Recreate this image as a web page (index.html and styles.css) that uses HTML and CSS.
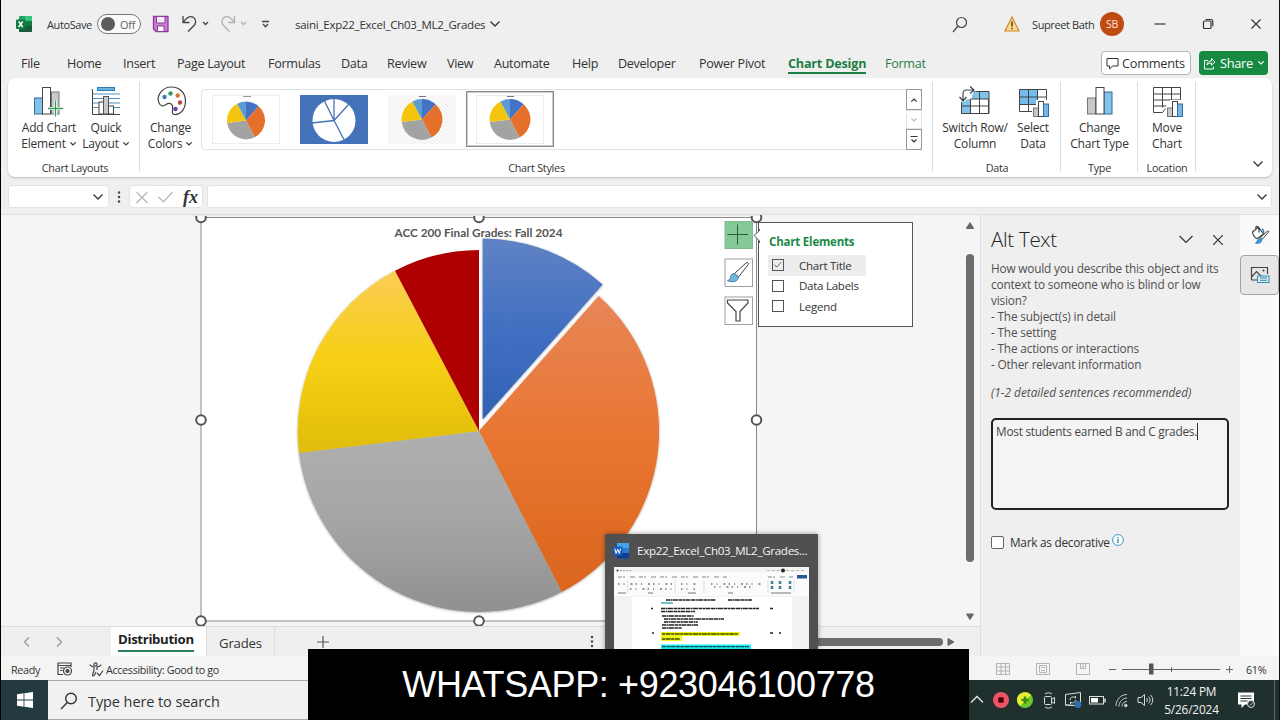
FILE: index.html
```html
<!DOCTYPE html>
<html lang="en">
<head>
<meta charset="utf-8">
<title>saini_Exp22_Excel_Ch03_ML2_Grades</title>
<link rel="stylesheet" href="styles.css">
</head>
<body>
<svg class="defs" width="0" height="0">
  <defs>
    <symbol id="minipie" viewBox="-21 -21 42 42">
      <path d="M0 0V-20A20 20 0 0 1 13.3-14.9Z" fill="#4472c4"/>
      <path d="M0 0L13.3-14.9A20 20 0 0 1 9.2 17.7Z" fill="#e5702c"/>
      <path d="M0 0L9.2 17.7A20 20 0 0 1-19.8 2.5Z" fill="#a3a3a3"/>
      <path d="M0 0L-19.8 2.5A20 20 0 0 1-9.3-17.7Z" fill="#f3c50f"/>
      <path d="M0 0L-9.3-17.7A20 20 0 0 1 0-20Z" fill="#5b9bd5"/>
    </symbol>
    <symbol id="chev" viewBox="0 0 12 8"><path d="M1.5 1.5L6 6l4.500-4.500" fill="none" stroke="currentColor" stroke-width="1.300"/></symbol>
    <symbol id="chevs" viewBox="0 0 8 6"><path d="M1.300 1.300L4 4l2.700-2.700" fill="none" stroke="currentColor" stroke-width="1.200"/></symbol>
  </defs>
</svg>
<div class="app">
  <header class="titlebar">
    <svg class="xl" width="18" height="18" viewBox="15 15 18 18"><rect x="19" y="16" width="13" height="16" rx="1" fill="#21a366"/><path d="M25 16h6a1 1 0 0 1 1 1v4h-7z" fill="#33c481"/><path d="M19 24h13v7a1 1 0 0 1-1 1H20a1 1 0 0 1-1-1z" fill="#185c37"/><path d="M25 21h7v5h-7z" fill="#107c41"/><rect x="16" y="19.500" width="9.500" height="9.500" rx="1" fill="#107c41"/><path d="M18.700 21.500l4 5.500m0-5.500l-4 5.500" stroke="#fff" stroke-width="1.500"/></svg>
    <span class="autosave">AutoSave</span>
    <span class="toggle"><i></i>Off</span>
    <svg class="save" width="18" height="18" viewBox="152 15 18 18"><path d="M153.500 16.500h14.500v15h-12l-2.500-2.500z" fill="#c77fd2" stroke="#8e3ca0" stroke-width="1.300"/><path d="M156.500 16.500h8.500v6.500h-8.500z" fill="#f6ecf8" stroke="#8e3ca0"/><path d="M157.500 31.500v-5.500h6.500v5.500z" fill="#fff" stroke="#8e3ca0"/></svg>
    <svg class="undo" width="88" height="22" viewBox="181 13 88 22" fill="none" stroke="#444" stroke-width="1.300"><path d="M183 16v6.500h6.500M183.500 22c3-5 7-6.500 10-4.500 3.500 2.500 2.500 6-.5 9l-5 5"/><path d="M203 22l2.500 2.500L208 22"/><g stroke="#b0b0b0"><path d="M234.500 16v6.500H228M234 22c-3-5-7-6.500-10-4.500-3.500 2.500-2.500 6 .5 9l5 5"/><path d="M241 22l2.500 2.500L246 22"/></g><path d="M262 21.500h7M263 24l2.500 2.700L268 24" /></svg>
    <span class="docname">saini_Exp22_Excel_Ch03_ML2_Grades</span>
    <svg class="docchev" width="12" height="8"><use href="#chev"/></svg>
    <svg class="search" width="16" height="17" viewBox="952 15 16 17" fill="none" stroke="#444" stroke-width="1.200"><circle cx="961.500" cy="21.500" r="5"/><path d="M958 25l-5 6"/></svg>
    <svg class="warn" width="16" height="16" viewBox="1004 16 16 16"><path d="M1012 17l7 14h-14z" fill="#fbd98a" stroke="#d08a28" stroke-width="1.200"/><path d="M1012 21.500v5m0 1.300v1.500" stroke="#333" stroke-width="1.400"/></svg>
    <span class="user">Supreet Bath</span>
    <span class="avatar">SB</span>
    <svg class="winbtns" width="112" height="16" viewBox="1153 16 112 16" fill="none" stroke="#333" stroke-width="1.200"><path d="M1154.500 24h11"/><rect x="1203.500" y="21" width="7.500" height="7.500" rx="1"/><path d="M1205.500 19.500h5.500a1.800 1.800 0 0 1 1.800 1.800v5"/><path d="M1251.500 19.500l9 9m0-9l-9 9"/></svg>
  </header>
  <nav class="tabs">
    <span class="t46">File</span><span class="t56">Home</span><span class="t54">Insert</span><span class="t91">Page Layout</span><span class="t73">Formulas</span><span class="t46">Data</span><span class="t60">Review</span><span class="t47">View</span><span class="t78">Automate</span><span class="t46">Help</span><span class="t81">Developer</span><span class="t89">Power Pivot</span><span class="t96 active"><b>Chart Design</b></span><span class="format">Format</span>
    <div class="comments"><svg width="13" height="13" viewBox="0 0 13 13"><path d="M1 1.500h11v7.500H6.500L3.500 12V9H1z" fill="none" stroke="#333"/></svg>Comments</div>
    <div class="share"><svg width="13" height="13" viewBox="0 0 13 13" fill="none" stroke="#fff"><path d="M5 3.500H1.500V12h9V9.500M4 8c0-3 2-4 4.500-4V1.500L12 5 8.500 8.200V6C6.500 6 5 6.500 4 8z"/></svg>Share<svg class="schev" width="8" height="6"><use href="#chevs"/></svg></div>
  </nav>
  <section class="ribbon">
    <div class="group g-layouts">
      <div class="btns">
        <div class="rbtn w72"><svg width="32" height="32" viewBox="35 86 32 32"><rect x="36.500" y="98" width="8" height="16" fill="#83c3ea" stroke="#2f6f9c"/><rect x="53.500" y="92" width="7.500" height="22" fill="#c8c8c8" stroke="#777"/><rect x="44.500" y="87.500" width="8" height="26.500" fill="#fff" stroke="#444"/><path d="M57.500 100.500v16M50 108.500h15" stroke="#fff" stroke-width="3"/><path d="M57.500 100.500v16M50 108.500h15" stroke="#2f9e4f" stroke-width="1.300"/></svg><p>Add Chart<br>Element <svg class="c" width="8" height="6"><use href="#chevs"/></svg></p></div>
        <div class="rbtn w44"><svg width="32" height="32" viewBox="90 86 32 32"><path d="M92.500 89v25.500H120" fill="none" stroke="#444"/><path d="M93 94h27M93 98.500h27M93 103h27M93 107.500h27" stroke="#4a93bd"/><rect x="97.500" y="87.500" width="17" height="3" fill="#6bb0dd" stroke="#2f7fb5"/><rect x="99" y="102" width="4.500" height="12" fill="#fff" stroke="#444"/><rect x="103.500" y="96.500" width="5" height="17.500" fill="#c9c9c9" stroke="#555"/><rect x="108.500" y="106" width="5" height="8" fill="#fff" stroke="#444"/></svg><p>Quick<br>Layout <svg class="c" width="8" height="6"><use href="#chevs"/></svg></p></div>
      </div>
      <div class="cap">Chart Layouts</div>
    </div>
    <div class="group g-styles">
      <div class="btns">
        <div class="rbtn w61"><svg width="32" height="32" viewBox="156 86 32 32"><path d="M160 103c-3-7 3-16 12.500-16 8 0 14 6 14 14 0 9-6 14-11 13.500-4-.5-1-5-2-8.500-1-3-4-3.500-6.500-1.500-2.500 2-5.500 2-7-1.500z" fill="#fff" stroke="#444" stroke-width="1.200"/><circle cx="165.500" cy="97" r="2.200" fill="#3a7fb5"/><circle cx="171.500" cy="93.500" r="2.200" fill="#2f9e5a"/><circle cx="178.700" cy="95.500" r="2.200" fill="#e0702c"/><circle cx="181" cy="102.500" r="2.200" fill="#b54a3c"/><circle cx="176.500" cy="109" r="2.200" fill="#6a3fa0"/></svg><p>Change<br>Colors <svg class="c" width="8" height="6"><use href="#chevs"/></svg></p></div>
        <div class="gallery">
          <div class="cell"><svg width="68" height="49" viewBox="0 0 68 49"><rect x=".5" y=".5" width="67" height="48" fill="#fff" stroke="#ececec"/><path d="M31 1.500h8" stroke="#999"/><use href="#minipie" x="14" y="5.500" width="40" height="40"/></svg></div>
          <div class="cell"><svg width="68" height="49" viewBox="0 0 68 49"><rect width="68" height="49" fill="#4472b8"/><circle cx="34" cy="25.500" r="21.500" fill="#fff"/><path d="M34 25.500V2M34 25.500L49 9M34 25.500l10 19M34 25.500l-22 2.500M34 25.500L24 5" stroke="#4472b8" stroke-width="1.300"/></svg></div>
          <div class="cell"><svg width="68" height="49" viewBox="0 0 68 49"><defs><pattern id="hatch" width="4" height="4" patternUnits="userSpaceOnUse"><path d="M0 0l4 4" stroke="#ebebeb"/></pattern></defs><rect width="68" height="49" fill="#fafafa"/><rect width="68" height="49" fill="url(#hatch)"/><path d="M31 1.500h7" stroke="#777"/><use href="#minipie" x="12.500" y="3" width="43" height="43"/></svg></div>
          <div class="cell sel"><svg width="68" height="49" viewBox="0 0 68 49"><rect x=".5" y=".5" width="67" height="48" fill="#fff" stroke="#ececec"/><path d="M31 1.500h7" stroke="#777"/><use href="#minipie" x="12.500" y="3" width="43" height="43"/></svg></div>
          <div class="gscroll"><div><svg width="8" height="6" class="up"><use href="#chevs"/></svg></div><div class="off"><svg width="8" height="6"><use href="#chevs"/></svg></div><div><svg width="10" height="9" viewBox="0 0 10 9" fill="none" stroke="#333" stroke-width="1.200"><path d="M1.500 1.500h7M2.500 4.500L5 7l2.500-2.500"/></svg></div></div>
        </div>
      </div>
      <div class="cap">Chart Styles</div>
    </div>
    <div class="group g-data">
      <div class="btns">
        <div class="rbtn w84"><svg width="34" height="32" viewBox="958 84 34 32"><rect x="961.500" y="89.500" width="27" height="22" fill="#fff" stroke="#444"/><path d="M972 89.500h17v7.500h-17zM961.500 97h9v14.500h-9z" fill="#83c3ea"/><path d="M961.500 111.500v-14M961.500 104h27.500M970.500 97v14.500M979.500 89.500v22M970.500 97H989M961.500 111.500H989v-22H976" fill="none" stroke="#444"/><path d="M958 84h16l-1 8-9 8h-6z" fill="#fff"/><path d="M970 84.500l4 3.500-4 3.500M973.500 88h-7c-3 0-3.500 2-3.500 4v6.500M959.500 95l3.500 4 3.500-4" fill="none" stroke="#444" stroke-width="1.200"/></svg><p>Switch Row/<br>Column</p></div>
        <div class="rbtn w32"><svg width="32" height="32" viewBox="1017 86 32 32"><rect x="1019.500" y="89.500" width="27" height="22" fill="#fff"/><path d="M1019.500 89.500h18v15h-18z" fill="#74bbec"/><path d="M1019.500 89.500h27v22h-27zM1019.500 97h27M1019.500 104.500h27M1028.500 89.500v22M1037.500 89.500v22" fill="none" stroke="#444"/><path d="M1032 105h4v-5h13v18h-17z" fill="#fff"/><rect x="1033.500" y="108" width="5" height="8.500" fill="#c9c9c9" stroke="#777"/><rect x="1038.500" y="101.500" width="5" height="15" fill="#fff" stroke="#444"/><rect x="1043.500" y="104" width="5" height="12.500" fill="#74b8e6" stroke="#2f6f9c"/></svg><p>Select<br>Data</p></div>
      </div>
      <div class="cap">Data</div>
    </div>
    <div class="group g-type">
      <div class="btns center"><div class="rbtn"><svg width="32" height="32" viewBox="1083 86 32 32"><rect x="1086.500" y="98" width="8" height="16" fill="#c8c8c8" stroke="#777"/><rect x="1103" y="92" width="8" height="22" fill="#83c3ea" stroke="#2f6f9c"/><rect x="1095" y="87.500" width="8" height="26.500" fill="#fff" stroke="#444"/></svg><p>Change<br>Chart Type</p></div></div>
      <div class="cap">Type</div>
    </div>
    <div class="group g-loc">
      <div class="btns center"><div class="rbtn"><svg width="32" height="32" viewBox="1151 86 32 32"><path d="M1153.500 87.500h27v18M1153.500 87.500v25h9l3-4M1153.500 94h27M1153.500 100h27M1153.500 106h13M1162.500 87.500v20M1171.500 87.500v15" fill="none" stroke="#444"/><path d="M1166 106h4v-6h13v18h-17z" fill="#fff"/><rect x="1167.500" y="108" width="5" height="8.500" fill="#c9c9c9" stroke="#777"/><rect x="1172.500" y="101.500" width="5" height="15" fill="#fff" stroke="#444"/><rect x="1177.500" y="104" width="5" height="12.500" fill="#74b8e6" stroke="#2f6f9c"/></svg><p>Move<br>Chart</p></div></div>
      <div class="cap">Location</div>
    </div>
    <svg class="collapse" width="12" height="8"><use href="#chev"/></svg>
  </section>
  <section class="formula">
    <div class="namebox"><svg width="12" height="8"><use href="#chev"/></svg></div>
    <svg width="24" height="24" viewBox="0 0 24 24" fill="#444"><circle cx="10" cy="7.500" r="1.200"/><circle cx="10" cy="12" r="1.200"/><circle cx="10" cy="16.500" r="1.200"/></svg>
    <div class="fx"><svg width="50" height="20" viewBox="134 187 50 20" fill="none" stroke="#b5b5b5" stroke-width="1.200"><path d="M136.500 192l11 11m0-11l-11 11M158.500 197l5 5 9-10"/></svg><i>fx</i></div>
    <div class="fbox"><svg width="12" height="8"><use href="#chev"/></svg></div>
  </section>
  <main class="main">
    <div class="left">
      <div class="sheet">
        <svg class="chart" width="962" height="411" viewBox="0 215 962 411">
          <defs>
            <linearGradient id="gb" x2="0" y2="1"><stop offset="0" stop-color="#5f83c4"/><stop offset=".5" stop-color="#426fc1"/><stop offset="1" stop-color="#3161b3"/></linearGradient>
            <linearGradient id="go" x2="0" y2="1"><stop offset="0" stop-color="#e88657"/><stop offset=".5" stop-color="#e87530"/><stop offset="1" stop-color="#da651e"/></linearGradient>
            <linearGradient id="gg" x2="0" y2="1"><stop offset="0" stop-color="#afafaf"/><stop offset=".5" stop-color="#a5a5a5"/><stop offset="1" stop-color="#909090"/></linearGradient>
            <linearGradient id="gy" x2="0" y2="1"><stop offset="0" stop-color="#facd55"/><stop offset=".5" stop-color="#f6cf12"/><stop offset="1" stop-color="#dfbd10"/></linearGradient>
            <filter id="sh" x="-10%" y="-10%" width="120%" height="120%"><feDropShadow dx="0" dy=".5" stdDeviation="1.300" flood-color="#000" flood-opacity=".4"/></filter>
          </defs>
          <rect x="201" y="217.500" width="555.500" height="403.500" fill="#fff" stroke="#8a8a8a"/>
          <text x="394.500" y="237" class="ctitle" textLength="168" lengthAdjust="spacingAndGlyphs">ACC 200 Final Grades: Fall 2024</text>
          <g filter="url(#sh)">
            <path d="M479 431L598.700 296A181.500 181.500 0 0 1 561.700 592Z" fill="url(#go)"/>
            <path d="M479 431L561.700 592A181.500 181.500 0 0 1 299 453Z" fill="url(#gg)"/>
            <path d="M479 431L299 453A181 181 0 0 1 395 270.700Z" fill="url(#gy)"/>
          </g>
          <path d="M479 431L395 270.700A181 181 0 0 1 479 250Z" fill="#ae0000"/>
          <path d="M482.700 419.500V238.500A181 181 0 0 1 602.700 284.500Z" fill="url(#gb)" filter="url(#sh)"/>
          <g fill="#fff" stroke="#555" stroke-width="2"><circle cx="201" cy="217.500" r="4.800"/><circle cx="479" cy="217.500" r="4.800"/><circle cx="756.500" cy="217.500" r="4.800"/><circle cx="201" cy="420" r="4.800"/><circle cx="756.500" cy="420" r="4.800"/><circle cx="201" cy="621" r="4.800"/><circle cx="479" cy="621" r="4.800"/></g>
          <path d="M190 215h570" stroke="#efefef" stroke-width="2"/>
          <g stroke="#a0a0a0"><rect x="725" y="221.500" width="27.500" height="27" fill="#84c996" stroke="#7fb98d"/><rect x="725" y="259" width="27.500" height="27.500" fill="#fff"/><rect x="725" y="297" width="27.500" height="27.500" fill="#fff"/></g>
          <path d="M737.500 224.500v20M727.500 234.500h20.500" stroke="#2c5c3a"/>
          <path d="M734.500 273.500l11.500-10.500c1.500-1 3 0 2.300 1.500L738.500 277z" fill="#fff" stroke="#444"/><path d="M734.500 273.500c-2.500 0-3.500 1.500-4 3.800-.3 2-1.300 2.700-3 3.200 4 2 8.500 1.500 10-1 .6-1.300.8-1.800 1-2.500z" fill="#72b6df" stroke="#3d7ea6"/>
          <path d="M727.500 300h20.500v3l-8 8.500v9.500h-4V311.500l-8.500-8.500z" fill="#fff" stroke="#444" stroke-width="1.200"/>
        </svg>
        <div class="vscroll"><svg width="10" height="10" viewBox="0 0 10 10"><path d="M5 1L9 7a.8.8 0 0 1-.7 1H1.700A.8.800 0 0 1 1 7z" fill="#666"/></svg><i></i><svg width="10" height="10" viewBox="0 0 10 10"><path d="M1.500 2h7L5 7.500z" fill="#666" stroke="#666" stroke-linejoin="round"/></svg></div>
        <div class="flyout">
          <svg class="ptr" width="7" height="14" viewBox="0 0 7 14"><path d="M6.500 0v1.500L1 6.500l5.500 5.500V14" fill="#fff" stroke="#555"/></svg>
          <b>Chart Elements</b>
          <div class="opt on"><svg width="12" height="12" viewBox="0 0 12 12"><path d="M1.500 5.500l3 3L10 2.500" fill="none" stroke="#444"/></svg>Chart Title</div>
          <div class="opt"><svg width="12" height="12"></svg>Data Labels</div>
          <div class="opt"><svg width="12" height="12"></svg>Legend</div>
        </div>
      </div>
      <div class="sheettabs">
        <svg width="46" height="12" viewBox="20 635 46 12" fill="none" stroke="#999" stroke-width="1.300"><path d="M29 636.500l-4.500 4.500 4.500 4.500M57 636.500l4.500 4.500-4.500 4.500"/></svg>
        <div class="stab cur"><span>Distribution</span></div>
        <div class="stab">Grades</div>
        <svg class="plus" width="12" height="12" viewBox="0 0 12 12"><path d="M6 0v12M0 6h12" stroke="#555" stroke-width="1.200"/></svg>
        <svg class="dots" width="4" height="14" viewBox="0 0 4 14" fill="#444"><circle cx="2" cy="2" r="1.200"/><circle cx="2" cy="6.500" r="1.200"/><circle cx="2" cy="11" r="1.200"/></svg>
        <div class="hbar"></div>
        <svg width="8" height="10" viewBox="0 0 8 10"><path d="M1 1.500v7L7 5z" fill="#666" stroke="#666" stroke-linejoin="round"/></svg>
      </div>
    </div>
    <aside class="pane">
      <div class="phead"><h2>Alt Text</h2><svg width="14" height="9" viewBox="0 0 14 9"><path d="M.5 1L7 7.500 13.500 1" fill="none" stroke="#333" stroke-width="1.200"/></svg><svg width="10" height="10" viewBox="0 0 10 10"><path d="M0 0l10 10M10 0L0 10" stroke="#333" stroke-width="1.200"/></svg></div>
      <p class="desc">How would you describe this object and its<br>context to someone who is blind or low<br>vision?<br>- The subject(s) in detail<br>- The setting<br>- The actions or interactions<br>- Other relevant information</p>
      <p class="hint">(1-2 detailed sentences recommended)</p>
      <div class="area">Most students earned B and C grades.<i></i></div>
      <div class="mark"><span class="box"></span>Mark as decorative<svg width="12" height="12" viewBox="0 0 12 12"><circle cx="6" cy="6" r="5.400" fill="#fff" stroke="#3a9cc4"/><path d="M6 5v4M6 3v1.200" stroke="#2584b0" stroke-width="1.300"/></svg></div>
    </aside>
    <div class="strip">
      <svg width="38" height="36" viewBox="1240 217 38 36"><path d="M1252.500 232l6-5 5 7-6 4.500c-2 .5-5-4-5-6.500zM1256 229.500c-1-4 2-4.500 3 0v3" fill="#fff" stroke="#444" stroke-width="1.200"/><path d="M1262 229c1.500 1 2 2.500 1.500 4.500" stroke="#2f7fb5" stroke-width="1.500" fill="none"/><path d="M1269 231.500l-6.500 7.500-2-1.500 7-6.500z" fill="#fff" stroke="#444"/><path d="M1262.500 239c0 3-2.500 6-8 4.500 2-1 2.500-5 6-6z" fill="#3f95c8"/></svg>
      <div class="active"><svg width="20" height="18" viewBox="0 0 20 18"><path d="M1.500 14V1.500h16V8M1.500 11l5-5.500 5 5M9 14H1.500" fill="none" stroke="#444" stroke-width="1.200"/><circle cx="13.500" cy="4.500" r="1" fill="#444"/><rect x="7.500" y="10" width="11.500" height="6.500" fill="#d9edf7" stroke="#3789b0"/><path d="M10 12h7M10 14.300h7" stroke="#3789b0"/></svg></div>
    </div>
  </main>
  <footer class="status">
    <span class="ready">Ready</span>
    <svg class="macro" width="16" height="14" viewBox="0 0 16 14" fill="none" stroke="#444" stroke-width="1.200"><path d="M6 12.500H1V1h13v4M1 3.500h13M3 6h4M3 8.500h2.500"/><circle cx="10.500" cy="9" r="4"/><circle cx="10.500" cy="9" r="1.500" fill="#444"/></svg>
    <svg class="acc" width="15" height="15" viewBox="0 0 15 15" fill="none" stroke="#444" stroke-width="1.200"><circle cx="6.500" cy="2.500" r="1.600"/><path d="M1 2.500c0 1.500 1.500 2 4 2.500v3.500L3.500 13c0 1.500 1.500 1 2 0L7 10M12 2.500c0 1.500-1.500 2-4 2.500v3M8 11l2.500 2.500L14 8.500"/></svg>
    <span class="acctext">Accessibility: Good to go</span>
    <svg class="views" width="96" height="14" viewBox="995 662 96 14" fill="none" stroke="#b4b4b4"><path d="M996.500 663.500h13v11h-13zM996.500 667h13M996.500 671h13M1001 663.500v11M1005.500 663.500v11M1036.500 663.500h13v11h-13zM1039.500 665.500h7v7h-7zM1041 667.500h4M1041 670.500h4M1076.500 663.500h13v11h-13zM1080.500 663.500v5h5v-5M1083 663.500v5"/></svg>
    <svg class="zoom" width="126" height="14" viewBox="1108 662 126 14" stroke="#666"><path d="M1109 669.500h7M1122 669.500h98M1171.500 667v5M1226 669.500h7M1229.500 666v7"/><rect x="1149" y="663.500" width="4.500" height="11" fill="#555" stroke="none"/></svg>
    <span class="pct">61%</span>
  </footer>
  <footer class="taskbar">
    <div class="start"><svg width="16" height="16" viewBox="0 0 16 16"><path d="M0 2.200L6.600 1.300V7.600H0zM7.400 1.200L16 0V7.600H7.400zM0 8.400h6.600v6.300L0 13.800zM7.400 8.400H16V16l-8.600-1.200z" fill="#fff"/></svg></div>
    <div class="tsearch"><svg width="18" height="18" viewBox="0 0 18 18" fill="none" stroke="#333" stroke-width="1.400"><circle cx="11" cy="6.500" r="5.300"/><path d="M7.300 10.500L1 17"/></svg>Type here to search</div>
    <div class="tray">
      <svg viewBox="0 0 24 24"><path d="M6 14.500L12 8.500l6 6" fill="none" stroke="#e8e8e8" stroke-width="1.300"/></svg>
      <svg viewBox="0 0 24 24"><circle cx="12" cy="12" r="8" fill="#ee5468"/><rect x="9.300" y="9.300" width="5.400" height="5.400" rx="1" fill="#4a0008"/></svg>
      <svg viewBox="0 0 24 24"><circle cx="12" cy="12" r="8" fill="#6cc92c"/><path d="M4 12a8 8 0 0 1 14-5L7 18a8 8 0 0 1-3-6z" fill="#ecec32"/><path d="M12 8.500v7M8.500 12h7" stroke="#3c8a10" stroke-width="2.500"/></svg>
      <svg viewBox="0 0 24 24" fill="none" stroke="#ddd"><rect x="7.500" y="8.500" width="7" height="8" rx="1"/><path d="M14.500 11.500l3-2v6l-3-2M8 6c2-1.500 5-1.500 7 0M8 19c2 1.500 5 1.500 7 0"/></svg>
      <svg viewBox="0 0 24 24" fill="none" stroke="#ddd"><path d="M4.500 6.500l15-2V14M14 17.500l-9.500-.5zM4.500 6.500V17M9 12c0-3 4-4 5.500-2V8M15 12c-1 3-4 3.500-5.500 2v2"/><circle cx="17" cy="16.500" r="3.500" fill="#2f6fae" stroke="none"/></svg>
      <svg viewBox="0 0 24 24"><rect x="4.500" y="8.500" width="14" height="7.500" fill="none" stroke="#ddd"/><rect x="6" y="10" width="7" height="4.500" fill="#fff"/><path d="M20 10.500v4" stroke="#ddd" stroke-width="1.500"/></svg>
      <svg viewBox="0 0 24 24" fill="none" stroke="#ccc"><path d="M7 18C7 11.500 12 6.500 18 6.500M10 18.500c0-4.500 3.500-8.500 8-8.500M13 18.500c0-3 2-5 5-5"/><circle cx="16.800" cy="17.500" r="1.300" fill="#ddd"/></svg>
      <svg viewBox="0 0 24 24" fill="none" stroke="#ddd"><path d="M5 9.500h3l3.500-3v11l-3.500-3H5zM13.500 10c1 1 1 3 0 4M15.500 8.500c2 2 2 5 0 7M17.500 7c3 3 3 7 0 10"/></svg>
      <div class="clock">11:24 PM<br>5/26/2024</div>
      <svg viewBox="0 0 24 24" class="note"><path d="M4 4.500h16v12H11L7.500 20v-3.500H4z" fill="#fff"/><path d="M6.500 8h11M6.500 10.500h11M6.500 13h7" stroke="#233"/><circle cx="17" cy="16" r="3.500" fill="#233" stroke="#ddd"/><path d="M16 17.500l3-3" stroke="#ddd"/></svg>
      <i class="peek"></i>
    </div>
  </footer>
  <div class="preview">
    <div class="ptitle"><svg width="16" height="16" viewBox="0 0 16 16"><rect x="4" y="0" width="12" height="15.500" rx="1" fill="#2b7cd3"/><path d="M4 0h12v5H4z" fill="#41a5ee"/><path d="M4 10h12v5.500H4z" fill="#103f91"/><rect x="0" y="3.500" width="9.500" height="9" rx="1" fill="#185abd"/><path d="M1.800 5.500l1.300 5 1.600-4.500 1.600 4.500 1.300-5" stroke="#fff" fill="none"/></svg>Exp22_Excel_Ch03_ML2_Grades...</div>
    <svg width="195" height="83" viewBox="614 567 195 83">
      <rect x="614" y="567" width="195" height="83" fill="#f2f2f2"/><rect x="614" y="572" width="195" height="24" fill="#fbfbfb"/>
      <circle cx="617.500" cy="570.500" r="1" fill="#333"/><path d="M620 570.500h11" stroke="#aaa" stroke-dasharray="2 1"/><circle cx="783" cy="570.500" r="2" fill="#222"/><path d="M767 570.500h13M786 570.500h20" stroke="#bbb" stroke-dasharray="3 2"/>
      <rect x="797" y="575" width="10" height="3.500" fill="#2b579a"/>
      <path d="M618 577h110M768 577h26" stroke="#888" stroke-dasharray="4 1 2 5 5 4"/>
      <path d="M618 584h54M681 584h15M711 584h50M630 589h42M681 589h14M714 587h40" stroke="#777" stroke-width="1.300" stroke-dasharray="1.500 4 1 6 2 3"/>
      <path d="M628 580v13M675 580v13M704 580v13M768 580v13M794 580v13" stroke="#ddd"/>
      <path d="M772 581v9M780 581v9M790 581v9" stroke="#3d7f90" stroke-width="2.500" stroke-dasharray="3 2"/>
      <path d="M618 593h8M648 593h5M688 593h8M728 593h5M771 593h20" stroke="#777"/>
      <rect x="632" y="597" width="160" height="53" fill="#fff"/>
      <g stroke="#222" stroke-width="1.300" stroke-dasharray="4 .5 2 .4 5 .6"><path d="M666 600h50M728 600h24M661 608.500h98M661 611.500h34M662 616h32M664 619h60M664 622h34M662 625h36M662 628h20M651 608.500h2M770 608.500h3M652 633h2M770 633h3M779 633h2"/></g>
      <path d="M661 603h12" stroke="#199" stroke-width="1.200"/>
      <path d="M661 632h79v4h-79zM661 636h21v5h-21z" fill="#f2f51a"/><path d="M662 634h76M662 639h18" stroke="#3a4a00" stroke-width="1.500" stroke-dasharray="3 .6 5 .5"/>
      <path d="M661 644.500h90v4.500h-90z" fill="#20e8e8"/><path d="M662 646.700h87" stroke="#056" stroke-width="1.300" stroke-dasharray="4 .6"/>
    </svg>
  </div>
  <div class="banner">WHATSAPP: +923046100778</div>
</div>
</body>
</html>
```
FILE: styles.css
```css
* { box-sizing: border-box; }
body { margin: 0; font-family: "Open Sans", "Noto Sans", sans-serif; color: #333; background: #000; }
p, h2 { margin: 0; }
svg { flex: none; display: block; }
.defs { position: absolute; }
.app { position: relative; width: 1280px; height: 720px; overflow: hidden; display: flex; flex-direction: column; background: #efefef; border-left: 1px solid #000; border-right: 1px solid #111; white-space: nowrap; }

.titlebar { height: 48px; display: flex; align-items: center; font-size: 11.5px; letter-spacing: -.3px; flex: none; }
.xl { margin-left: 14px; }
.autosave { margin-left: 14px; width: 50px; font-size: 11px; letter-spacing: -.4px; }
.toggle { width: 44px; height: 20px; border: 1px solid #777; border-radius: 10px; background: #fafafa; display: flex; align-items: center; gap: 5px; padding-left: 3px; font-size: 11px; color: #666; }
.toggle i { width: 14px; height: 14px; border-radius: 50%; background: #5c5c5c; }
.save { margin-left: 11px; }
.undo { margin-left: 11px; }
.docname { margin-left: 26px; width: 194px; letter-spacing: -.25px; }
.docchev { width: 12px; }
.search { margin-left: 451px; }
.warn { margin-left: 36px; }
.user { margin-left: 11px; width: 69px; font-size: 11px; letter-spacing: -.43px; padding-left: 1px; }
.user { letter-spacing: -.38px; }
.avatar { width: 24px; height: 24px; border-radius: 50%; background: #c04a14; color: #fbe5da; font-size: 10.5px; display: flex; align-items: center; justify-content: center; }
.winbtns { margin-left: 29px; }

.tabs { height: 30px; flex: none; display: flex; align-items: center; padding-left: 20px; font-size: 12.6px; letter-spacing: -.3px; line-height: 32px; }
.tabs > span { padding-top: 2px; }
.t46 { width: 46px; } .t47 { width: 47px; } .t54 { width: 54px; } .t56 { width: 56px; } .t60 { width: 60px; }
.t73 { width: 73px; } .t78 { width: 78px; } .t81 { width: 81px; } .t89 { width: 89px; } .t91 { width: 91px; } .t96 { width: 97px; }
.active b { display: inline-block; color: #1b7f45; line-height: 17px; border-bottom: 2px solid #1b7f45; letter-spacing: -.2px; }
.format { color: #2b7f4c; width: 216px; }
.comments, .share { height: 24px; border-radius: 4px; display: flex; align-items: center; line-height: 20px; font-size: 12.8px; }
.comments { width: 90px; border: 1px solid #b5b5b5; background: #fff; padding-left: 4px; gap: 3px; }
.share { width: 69px; margin-left: 8px; background: #178a42; color: #fff; padding-left: 4px; gap: 4px; }

.ribbon { height: 99px; flex: none; margin: 0 7px; background: #fff; border-radius: 7px; box-shadow: 0 1px 2px rgba(0,0,0,.22); display: flex; position: relative; }
.group { display: flex; flex-direction: column; padding-top: 8px; position: relative; }
.group::after { content: ""; position: absolute; right: 0; top: 4px; bottom: 5px; width: 1px; background: #dcdcdc; }
.g-layouts { width: 132px; } .g-styles { width: 793px; } .g-data { width: 128px; } .g-type { width: 77px; } .g-loc { width: 58px; }
.btns { display: flex; height: 73px; }
.btns.center { justify-content: center; }
.rbtn { display: flex; flex-direction: column; align-items: center; font-size: 12px; letter-spacing: -.2px; line-height: 16px; text-align: center; }
.rbtn p { margin-top: 2px; }
.w72 { width: 72px; margin-left: 5px; } .w44 { width: 44px; margin-left: -1px; } .w61 { width: 61px; } .w84 { width: 84px; } .w32 { width: 32px; }
.c { display: inline-block; vertical-align: 1px; }
.cap { font-size: 10.8px; letter-spacing: -.25px; text-align: center; line-height: 18px; }
.g-layouts .cap { padding-left: 2px; }
.gallery { width: 721px; height: 61px; margin-top: 3px; border: 1px solid #dde3e6; border-radius: 4px; display: flex; }
.cell { width: 88px; height: 56px; margin-top: 1px; display: flex; align-items: center; justify-content: center; }
.sel { border: 1px solid #888; outline: 1px solid #ccc; outline-offset: -2px; }
.gscroll { margin: -1px -1px 0 auto; width: 16px; }
.gscroll div { height: 21px; border: 1px solid #999; display: flex; align-items: center; justify-content: center; }
.gscroll div.off { height: 19px; border-color: #e3e3e3; color: #bbb; }
.up { transform: rotate(180deg); }
.collapse { position: absolute; right: 8px; bottom: 9px; }

.formula { height: 38px; flex: none; display: flex; align-items: center; padding: 2px 7px 0; border-bottom: 1px solid #dedede; }
.namebox, .fx, .fbox { background: #fff; height: 23px; border-radius: 3px; border: 1px solid #e4e4e4; display: flex; align-items: center; }
.namebox { width: 101px; justify-content: flex-end; padding-right: 4px; }
.fx { width: 74px; padding-left: 4px; margin-left: -4px; }
.fx i { font: italic 600 18px/20px "Liberation Serif", serif; margin-left: -1px; }
.fbox { flex: 1; margin-left: 4px; justify-content: flex-end; padding-right: 3px; }

.main { height: 441px; flex: none; display: flex; }
.left { width: 979px; }
.sheet { height: 411px; display: flex; position: relative; background: #f5f5f5; }
.chart { margin-left: -1px; }
.ctitle { font: bold 12px Lato, sans-serif; fill: #555; }
.vscroll { width: 16px; display: flex; flex-direction: column; align-items: center; padding: 6px 0 4px; }
.vscroll i { width: 8px; height: 308px; border-radius: 4px; background: #6d6d6d; margin: 23px 0 auto; }
.flyout { position: absolute; left: 757px; top: 7px; width: 155px; height: 105px; background: #fff; border: 1px solid #555; padding: 10px 9px; font-size: 11.5px; letter-spacing: -.25px; }
.flyout b { display: block; margin-left: 1px; line-height: 17px; color: #1b8a48; margin-bottom: 5px; letter-spacing: -.2px; }
.ptr { position: absolute; left: -6px; top: 6px; }
.opt { display: flex; align-items: center; width: 98px; height: 20.500px; padding-left: 4px; gap: 15px; }
.opt svg { border: 1px solid #555; }
.opt.on { background: #ededed; }
.sheettabs { height: 30px; border-top: 1px solid #dcdcdc; display: flex; align-items: center; padding-left: 19px; font-size: 13.2px; letter-spacing: -.2px; }
.stab { width: 68px; height: 29px; border-right: 1px solid #ddd; padding-left: 12px; line-height: 33px; }
.stab.cur { width: 96px; height: 29px; margin-left: 45px; background: #fff; border: 0; border-right: 1px solid #ddd; padding: 2px 0 0 7px; line-height: 18px; font-weight: 700; letter-spacing: -.33px; color: #222; }
.cur span { display: inline-block; border-bottom: 2px solid #2c7d58; line-height: 21px; }
.plus { margin-left: 42px; }
.dots { margin-left: 261px; }
.hbar { height: 8px; width: 190px; border-radius: 4px; background: #6d6d6d; margin: 0 4px 0 159px; }

.pane { width: 260px; border-left: 1px solid #ddd; background: #efefef; padding: 10px 11px 0 10px; font-size: 11.8px; letter-spacing: -.17px; color: #505050; }
.phead { display: flex; align-items: center; height: 27px; }
.phead h2 { font-size: 20.5px; font-weight: 300; letter-spacing: -.3px; width: 188px; color: #222; }
.phead svg { margin-top: 2px; }
.phead svg + svg { margin-left: 20px; }
.desc { line-height: 16px; margin-top: 8px; }
.hint { font-style: italic; line-height: 16px; margin-top: 12px; letter-spacing: 0; }
.area { width: 238px; height: 92px; margin-top: 18px; border: 2px solid #222; border-radius: 5px; background: #f4f4f4; padding: 3px 3px; line-height: 17px; color: #444; display: flex; letter-spacing: -.23px; }
.area i { width: 1px; height: 17px; background: #333; }
.mark { display: flex; align-items: center; margin-top: 23px; height: 18px; color: #333; letter-spacing: -.25px; }
.box { width: 13px; height: 13px; border: 1px solid #666; border-radius: 2px; background: #fff; margin-right: 6px; }
.mark svg { margin: -4px 0 0 2px; }
.strip { width: 39px; background: #fafafa; padding-top: 2px; }
.strip .active { height: 40px; margin-top: 2px; border: 1px solid #a5a5a5; border-radius: 4px; background: #e6e6e6; display: flex; align-items: center; justify-content: center; }

.status { height: 24px; flex: none; display: flex; align-items: center; background: #f4f4f4; font-size: 10.8px; letter-spacing: -.35px; padding: 2px 0 0 10px; }
.ready { width: 46px; }
.acc { margin-left: 16px; }
.acctext { margin-left: 2px; width: 115px; }
.views { margin-left: 774px; }
.zoom { margin-left: 17px; }
.pct { margin-left: 12px; }

.taskbar { height: 40px; flex: none; display: flex; background: #20302f; }
.start { width: 47px; background: #223a40; display: flex; align-items: center; justify-content: center; }
.tsearch { width: 270px; background: #f1f1f1; border: solid #aaa; border-width: 1px 0; display: flex; align-items: center; gap: 10px; padding: 2px 0 0 12px; font-size: 14.5px; letter-spacing: -.09px; }
.tray { margin-left: 647px; display: flex; align-items: center; }
.tray svg { width: 24px; height: 24px; }
.clock { width: 73px; margin-left: -2px; color: #f2f2f2; font-size: 11.8px; line-height: 18px; text-align: center; letter-spacing: -.15px; }
.tray .note { margin-left: 6px; }
.peek { width: 1px; height: 40px; background: #667; margin-left: 16px; }

.preview { position: absolute; left: 604px; top: 534px; width: 213px; height: 116px; background: #505050; padding: 0 9px; box-shadow: 0 0 5px rgba(0,0,0,.4); }
.ptitle { height: 33px; margin-left: -1px; display: flex; align-items: center; gap: 8px; color: #f4f4f4; font-size: 11.6px; letter-spacing: -.3px; }
.banner { position: absolute; left: 307px; top: 649px; width: 661px; height: 71px; background: #000; color: #fff; font: 36px/72px "Liberation Sans", Arial, sans-serif; text-align: center; letter-spacing: -.36px; }
```
